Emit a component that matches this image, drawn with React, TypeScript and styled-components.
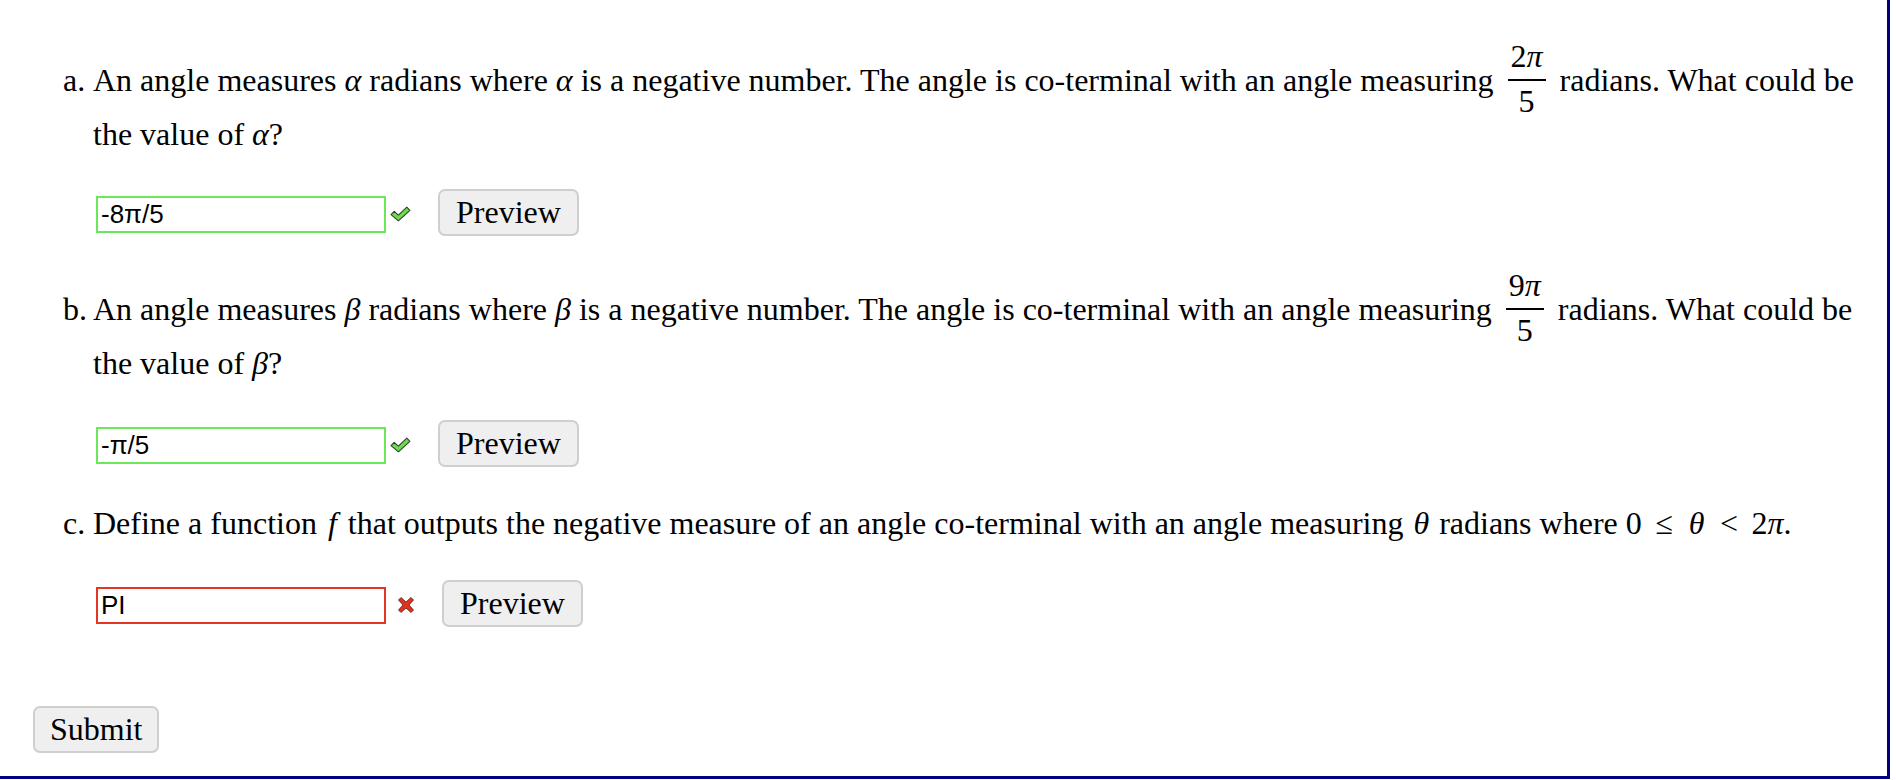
import React from 'react'
import styled, { createGlobalStyle } from 'styled-components'

const GlobalStyle = createGlobalStyle`
  html, body {
    margin: 0;
    padding: 0;
    background: #fff;
    overflow: hidden;
  }
  body {
    font-family: 'Liberation Serif', 'Times New Roman', serif;
    color: #000;
  }
`

const Page = styled.div`
  box-sizing: border-box;
  width: 1890px;
  height: 779px;
  padding: 36px 0 0 33px;
  border-right: 3px solid #000080;
  border-bottom: 3px solid #000080;
`

const ProblemList = styled.div`
  margin-left: 30px;
`

const Item = styled.div`
  display: grid;
  grid-template-columns: 30px 1fr;
  align-items: baseline;
  & + & {
    margin-top: 29px;
  }
`

const Marker = styled.span`
  font-size: 32px;
  line-height: 54px;
  white-space: nowrap;
`

const Body = styled.div`
  min-width: 0;
`

const Para = styled.p`
  margin: 0;
  font-size: 32px;
  line-height: 54px;
`

const MathVar = styled.i<{ $pad?: number }>`
  font-family: 'Liberation Serif', 'Times New Roman', serif;
  font-style: italic;
  padding: 0 ${(p) => p.$pad ?? 0}px;
`

const Rel = styled.span`
  display: inline-block;
  width: 0.72em;
  margin: 0 11px;
  text-align: center;
`

const Frac = styled.span`
  display: inline-flex;
  flex-direction: column;
  align-items: stretch;
  vertical-align: 24px;
  margin: 6px 6px -8px;
  text-align: center;
`

const Num = styled.span`
  line-height: 28px;
  padding: 0 3px 9px;
`

const Bar = styled.span`
  height: 2px;
  background: #000;
`

const Den = styled.span`
  line-height: 28px;
  padding-top: 6px;
`

const AnswerRow = styled.div<{ $first?: boolean }>`
  display: flex;
  align-items: center;
  margin-top: ${(p) => (p.$first ? 28 : 30)}px;
`

const AnswerInput = styled.input<{ $state: 'correct' | 'incorrect' }>`
  box-sizing: border-box;
  width: 290px;
  height: 37px;
  margin: 3px 0 0 3px;
  padding: 0 3px;
  border: 2px solid ${(p) => (p.$state === 'correct' ? '#6be85a' : '#e43525')};
  border-radius: 0;
  outline: none;
  font-family: 'Liberation Sans', Arial, sans-serif;
  font-size: 26px;
  color: #000;
  background: #fff;
`

const StatusIcon = styled.span<{ $left: number; $right: number }>`
  display: inline-flex;
  margin: 3px ${(p) => p.$right}px 0 ${(p) => p.$left}px;
`

const Button = styled.button`
  box-sizing: border-box;
  height: 47px;
  padding: 0 16px;
  border: 2px solid #cfcfcf;
  border-radius: 7px;
  background: #efefef;
  font-family: 'Liberation Serif', 'Times New Roman', serif;
  font-size: 32px;
  color: #000;
  cursor: pointer;
`

const SubmitButton = styled(Button)`
  margin-top: 79px;
  padding: 0 15px;
`

const CheckIcon = () => (
  <svg width="21" height="16" viewBox="0 0 20 15">
    <polygon
      points="1,8 4,5 8,8.5 16,1 19,4 8,14"
      fill="#6cdc4c"
      stroke="#2f3a2a"
      strokeWidth="1"
      strokeLinejoin="round"
    />
  </svg>
)

const CrossIcon = () => (
  <svg width="16" height="16" viewBox="0 0 16 16">
    <polygon
      points="3,0.5 8,5 13,0.5 15.5,3 11,8 15.5,13 13,15.5 8,11 3,15.5 0.5,13 5,8 0.5,3"
      fill="#e2321f"
      stroke="#5a1a14"
      strokeWidth="0.8"
      strokeLinejoin="round"
    />
  </svg>
)

type RowProps = {
  value: string
  state: 'correct' | 'incorrect'
  first?: boolean
}

const Answer = ({ value, state, first }: RowProps) => (
  <AnswerRow $first={first}>
    <AnswerInput $state={state} defaultValue={value} />
    {state === 'correct' ? (
      <StatusIcon $left={4} $right={27}>
        <CheckIcon />
      </StatusIcon>
    ) : (
      <StatusIcon $left={12} $right={28}>
        <CrossIcon />
      </StatusIcon>
    )}
    <Button type="button">Preview</Button>
  </AnswerRow>
)

const Fraction = ({ n }: { n: string }) => (
  <Frac>
    <Num>
      {n}
      <MathVar>π</MathVar>
    </Num>
    <Bar />
    <Den>5</Den>
  </Frac>
)

export default function App() {
  return (
    <>
      <GlobalStyle />
      <Page>
        <ProblemList>
          <Item>
            <Marker>a.</Marker>
            <Body>
              <Para>
                An angle measures <MathVar>α</MathVar> radians where <MathVar>α</MathVar> is a negative number. The
                angle is co-terminal with an angle measuring <Fraction n="2" /> radians. What could be the value of{' '}
                <MathVar>α</MathVar>?
              </Para>
              <Answer value="-8π/5" state="correct" first />
            </Body>
          </Item>
          <Item>
            <Marker>b.</Marker>
            <Body>
              <Para>
                An angle measures <MathVar>β</MathVar> radians where <MathVar>β</MathVar> is a negative number. The
                angle is co-terminal with an angle measuring <Fraction n="9" /> radians. What could be the value of{' '}
                <MathVar>β</MathVar>?
              </Para>
              <Answer value="-π/5" state="correct" />
            </Body>
          </Item>
          <Item>
            <Marker>c.</Marker>
            <Body>
              <Para>
                Define a function <MathVar $pad={3}>f</MathVar> that outputs the negative measure of an angle
                co-terminal with an angle measuring <MathVar $pad={2}>θ</MathVar> radians where 0<Rel>≤</Rel>
                <MathVar $pad={2}>θ</MathVar>
                <Rel>&lt;</Rel>2<MathVar>π</MathVar>.
              </Para>
              <Answer value="PI" state="incorrect" />
            </Body>
          </Item>
        </ProblemList>
        <SubmitButton type="button">Submit</SubmitButton>
      </Page>
    </>
  )
}
